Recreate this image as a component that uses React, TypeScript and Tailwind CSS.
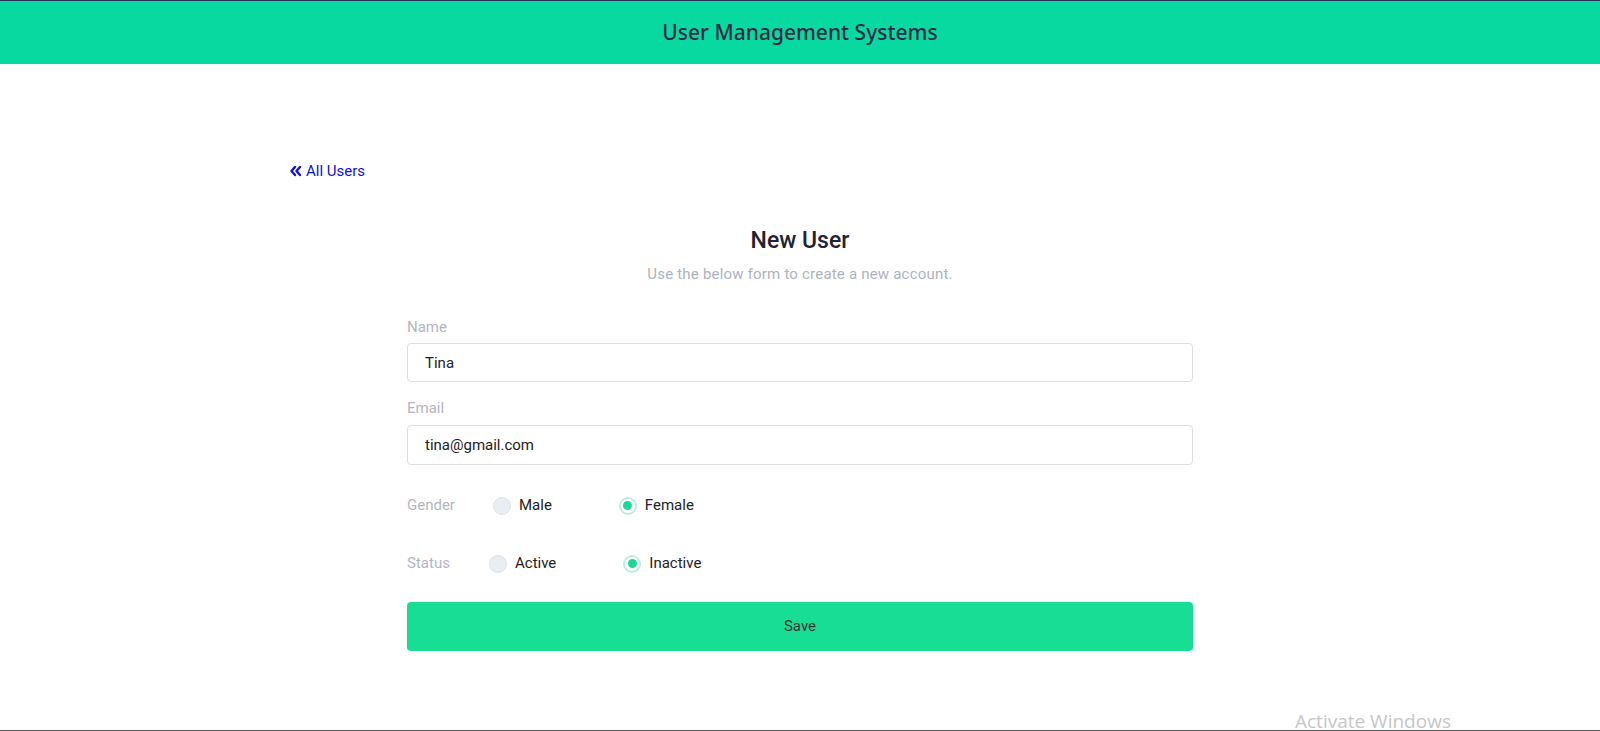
import React, { useState } from 'react';

const RadioOption = ({
  label,
  checked,
  onSelect,
}: {
  label: string;
  checked: boolean;
  onSelect: () => void;
}) => (
  <button type="button" onClick={onSelect} className="flex items-center mr-[67px]">
    {checked ? (
      <span className="w-[18px] h-[18px] rounded-full border-2 border-[#bfeedd] bg-white flex items-center justify-center">
        <span className="w-[9px] h-[9px] rounded-full bg-[#19d89a]" />
      </span>
    ) : (
      <span className="w-[18px] h-[18px] rounded-full border border-[#dfe4ea] bg-[#e9eef3]" />
    )}
    <span className="ml-2 text-[15px] text-[#222]">{label}</span>
  </button>
);

const App: React.FC = () => {
  const [name, setName] = useState('Tina');
  const [email, setEmail] = useState('tina@gmail.com');
  const [gender, setGender] = useState('female');
  const [status, setStatus] = useState('inactive');

  return (
    <div
      className="relative h-[731px] flex flex-col bg-white"
      style={{ fontFamily: 'Roboto, "Liberation Sans", sans-serif' }}
    >
      {/* Header */}
      <header className="h-[64px] bg-[#07d9a1] border-t border-[#25305a] flex items-center justify-center">
        <h1
          className="text-[21px] font-medium text-[#2a2c45]"
          style={{ fontFamily: '"Noto Sans", "Open Sans", sans-serif' }}
        >
          User Management Systems
        </h1>
      </header>

      {/* Content */}
      <main className="flex-1">
        <div className="w-[1022px] mx-auto pt-[96px]">
          <a href="#" className="flex items-center text-[15px] text-[#1010e0]">
            <svg width="13" height="12" viewBox="0 0 13 12" className="mr-[4px]" fill="none">
              <path d="M6 2L2.5 6 6 10" stroke="#1010e0" strokeWidth="2.4" strokeLinecap="round" strokeLinejoin="round" />
              <path d="M11 2L7.5 6 11 10" stroke="#1010e0" strokeWidth="2.4" strokeLinecap="round" strokeLinejoin="round" />
            </svg>
            All Users
          </a>

          <div className="w-[786px] mx-auto mt-[41px]">
            <div className="text-center">
              <h2 className="text-[23px] font-medium text-[#23232f]">New User</h2>
              <p className="mt-[5px] text-[15px] tracking-[0.2px] text-[#adb3bd]">
                Use the below form to create a new account.
              </p>
            </div>

            <form className="mt-[30px]" onSubmit={e => e.preventDefault()}>
              <label className="block text-[15px] text-[#b3b6be] mb-[5px]">Name</label>
              <input
                value={name}
                onChange={e => setName(e.target.value)}
                className="w-full h-[39px] px-[17px] border border-[#dedede] rounded-[4px] text-[15px] text-[#222] outline-none"
              />

              <label className="block text-[15px] text-[#b3b6be] mt-[15px] mb-[5px]">Email</label>
              <input
                value={email}
                onChange={e => setEmail(e.target.value)}
                className="w-full h-[40px] px-[17px] border border-[#dedede] rounded-[4px] text-[15px] text-[#222] outline-none"
              />

              <div className="flex items-center mt-[31px] h-[20px]">
                <span className="text-[15px] text-[#b3b6be] w-[86px]">Gender</span>
                <RadioOption label="Male" checked={gender === 'male'} onSelect={() => setGender('male')} />
                <RadioOption label="Female" checked={gender === 'female'} onSelect={() => setGender('female')} />
              </div>

              <div className="flex items-center mt-[38px] h-[20px]">
                <span className="text-[15px] text-[#b3b6be] w-[82px]">Status</span>
                <RadioOption label="Active" checked={status === 'active'} onSelect={() => setStatus('active')} />
                <RadioOption label="Inactive" checked={status === 'inactive'} onSelect={() => setStatus('inactive')} />
              </div>

              <button
                type="submit"
                className="w-full h-[49px] mt-[28px] bg-[#17dd95] rounded-[4px] text-[15px] text-[#333]"
              >
                Save
              </button>
            </form>
          </div>
        </div>
      </main>

      <div className="h-[1px] bg-[#5c5c5c]" />

      {/* Windows watermark overlay */}
      <span
        className="absolute left-[1295px] top-[707px] text-[19px] text-[#c6c6c6] pointer-events-none"
        style={{ fontFamily: '"Open Sans", "Noto Sans", sans-serif' }}
      >
        Activate Windows
      </span>
    </div>
  );
};

export default App;
